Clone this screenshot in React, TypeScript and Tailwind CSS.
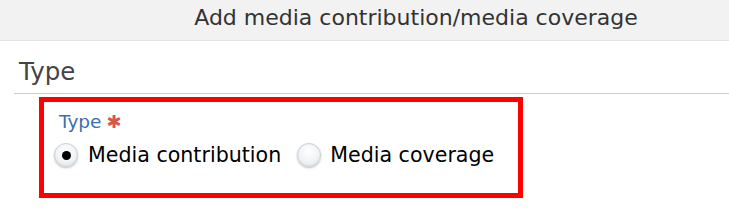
import React from "react";

function Radio({ checked }: { checked: boolean }) {
  return (
    <span className="relative inline-flex h-[24px] w-[24px] shrink-0 items-center justify-center rounded-full border border-[#c9cfd6] bg-[radial-gradient(circle_at_50%_35%,#ffffff_0%,#f1f3f6_55%,#d5dbe3_100%)] shadow-[0_1px_2px_rgba(0,0,0,0.25)]">
      {checked && <span className="h-[9px] w-[9px] rounded-full bg-black" />}
    </span>
  );
}

export default function App() {
  return (
    <div className="h-[219px] w-[729px] overflow-hidden bg-white" style={{ fontFamily: '"DejaVu Sans", sans-serif' }}>
      <div className="flex h-[41px] items-start justify-center border-b border-[#e3e3e3] bg-[#f2f2f2] pt-[4px] pl-[103px]">
        <span className="text-[22px] leading-[28px] text-[#333]">
          Add media contribution/media coverage
        </span>
      </div>
      <div className="pl-[19px] pt-[16px] pb-[6px]">
        <h2 className="text-[24.5px] leading-[30px] text-[#444]">Type</h2>
      </div>
      <div className="ml-[14px] border-t border-[#cccccc]" />
      <div className="ml-[39px] mt-[3px] flex h-[101px] w-[484px] flex-col border-[5px] border-[#ff0000] pl-[10px] pt-[9px]">
        <div className="flex items-center pl-[5px] text-[18.5px] leading-[22px] text-[#3a6fb0]">
          Type <span className="ml-[5px] text-[18px] text-[#d9534f]">✱</span>
        </div>
        <div className="mt-[10px] flex h-[24px] items-center">
          <Radio checked />
          <span className="ml-[10px] text-[20.6px] leading-[24px] text-black">Media contribution</span>
          <span className="ml-[16px] flex"><Radio checked={false} /></span>
          <span className="ml-[9px] text-[20.6px] leading-[24px] text-black">Media coverage</span>
        </div>
      </div>
    </div>
  );
}
